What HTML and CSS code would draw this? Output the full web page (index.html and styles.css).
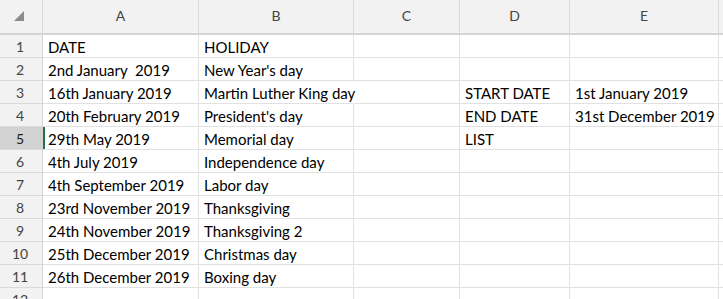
FILE: index.html
```html
<!DOCTYPE html>
<html lang="en">
<head>
  <meta charset="UTF-8">
  <title>Holidays 2019</title>
  <link rel="stylesheet" href="styles.css">
</head>
<body>

  <div class="sheet">
    <!-- column headers -->
    <div class="corner">
      <svg width="10" height="10" viewBox="0 0 10 10"><polygon points="10,0 10,10 0,10" fill="#8c8c8c"/></svg>
    </div>
    <div class="col-head">A</div>
    <div class="col-head">B</div>
    <div class="col-head">C</div>
    <div class="col-head">D</div>
    <div class="col-head">E</div>
    <div class="col-head last"></div>

    <div class="row-head">1</div>
    <div class="cell">DATE</div>
    <div class="cell">HOLIDAY</div>
    <div class="cell"></div><div class="cell"></div><div class="cell"></div><div class="cell last"></div>

    <div class="row-head">2</div>
    <div class="cell">2nd January&nbsp; 2019</div>
    <div class="cell">New Year's day</div>
    <div class="cell"></div><div class="cell"></div><div class="cell"></div><div class="cell last"></div>

    <div class="row-head">3</div>
    <div class="cell">16th January 2019</div>
    <div class="cell spill">Martin Luther King day</div>
    <div class="cell"></div>
    <div class="cell">START DATE</div>
    <div class="cell">1st January 2019</div>
    <div class="cell last"></div>

    <div class="row-head">4</div>
    <div class="cell">20th February 2019</div>
    <div class="cell">President's day</div>
    <div class="cell"></div>
    <div class="cell">END DATE</div>
    <div class="cell">31st December 2019</div>
    <div class="cell last"></div>

    <div class="row-head active">5</div>
    <div class="cell selected">29th May 2019</div>
    <div class="cell">Memorial day</div>
    <div class="cell"></div>
    <div class="cell">LIST</div>
    <div class="cell"></div><div class="cell last"></div>

    <div class="row-head">6</div>
    <div class="cell">4th July 2019</div>
    <div class="cell">Independence day</div>
    <div class="cell"></div><div class="cell"></div><div class="cell"></div><div class="cell last"></div>

    <div class="row-head">7</div>
    <div class="cell">4th September 2019</div>
    <div class="cell">Labor day</div>
    <div class="cell"></div><div class="cell"></div><div class="cell"></div><div class="cell last"></div>

    <div class="row-head">8</div>
    <div class="cell">23rd November 2019</div>
    <div class="cell">Thanksgiving</div>
    <div class="cell"></div><div class="cell"></div><div class="cell"></div><div class="cell last"></div>

    <div class="row-head">9</div>
    <div class="cell">24th November 2019</div>
    <div class="cell">Thanksgiving 2</div>
    <div class="cell"></div><div class="cell"></div><div class="cell"></div><div class="cell last"></div>

    <div class="row-head">10</div>
    <div class="cell">25th December 2019</div>
    <div class="cell">Christmas day</div>
    <div class="cell"></div><div class="cell"></div><div class="cell"></div><div class="cell last"></div>

    <div class="row-head">11</div>
    <div class="cell">26th December 2019</div>
    <div class="cell">Boxing day</div>
    <div class="cell"></div><div class="cell"></div><div class="cell"></div><div class="cell last"></div>

    <div class="row-head">12</div>
    <div class="cell"></div><div class="cell"></div><div class="cell"></div><div class="cell"></div><div class="cell"></div><div class="cell last"></div>
  </div>

</body>
</html>
```

FILE: styles.css
```css
/* base */
html, body {
  margin: 0; padding: 0;
  background: #fff;
  overflow: hidden;
  font-family: Lato, 'Open Sans', sans-serif;
  font-size: 15px;
  color: #000;
}

/* grid del foglio */
.sheet {
  display: grid;
  grid-template-columns: 43px 156px 155px 106px 110px 149px 1fr;
  grid-template-rows: 35px;
  grid-auto-rows: 23px;
  width: 723px;
}

/* intestazioni */
.corner, .col-head {
  background: #f2f2f2;
  border-right: 1px solid #d9d9d9;
  border-bottom: 2px solid #d4d4d4;
  box-sizing: border-box;
}
.corner {
  display: flex; align-items: flex-end; justify-content: flex-end;
  padding: 0 18px 12px 0;
}
.corner svg { display: block; }
.col-head {
  display: flex; align-items: center; justify-content: center;
  color: #444; font-size: 14px;
  padding-bottom: 2px;
}
.row-head {
  background: #f2f2f2;
  border-right: 1px solid #d4d4d4;
  border-bottom: 1px solid #dadada;
  box-sizing: border-box;
  display: flex; align-items: center; justify-content: center;
  color: #444; font-size: 14px;
  padding: 1px 2px 0 0;
}
.row-head.active {
  background: #d2d2d2;
  color: #222;
}

/* celle */
.cell {
  border-right: 1px solid #e1e1e1;
  border-bottom: 1px solid #e1e1e1;
  box-sizing: border-box;
  padding: 1px 4px 0 5px;
  white-space: nowrap;
  display: flex; align-items: center;
}
.cell.spill { border-right-color: transparent; }
.cell.selected { box-shadow: inset 2px 0 0 #217346; }
.last { border-right: none; }
```
